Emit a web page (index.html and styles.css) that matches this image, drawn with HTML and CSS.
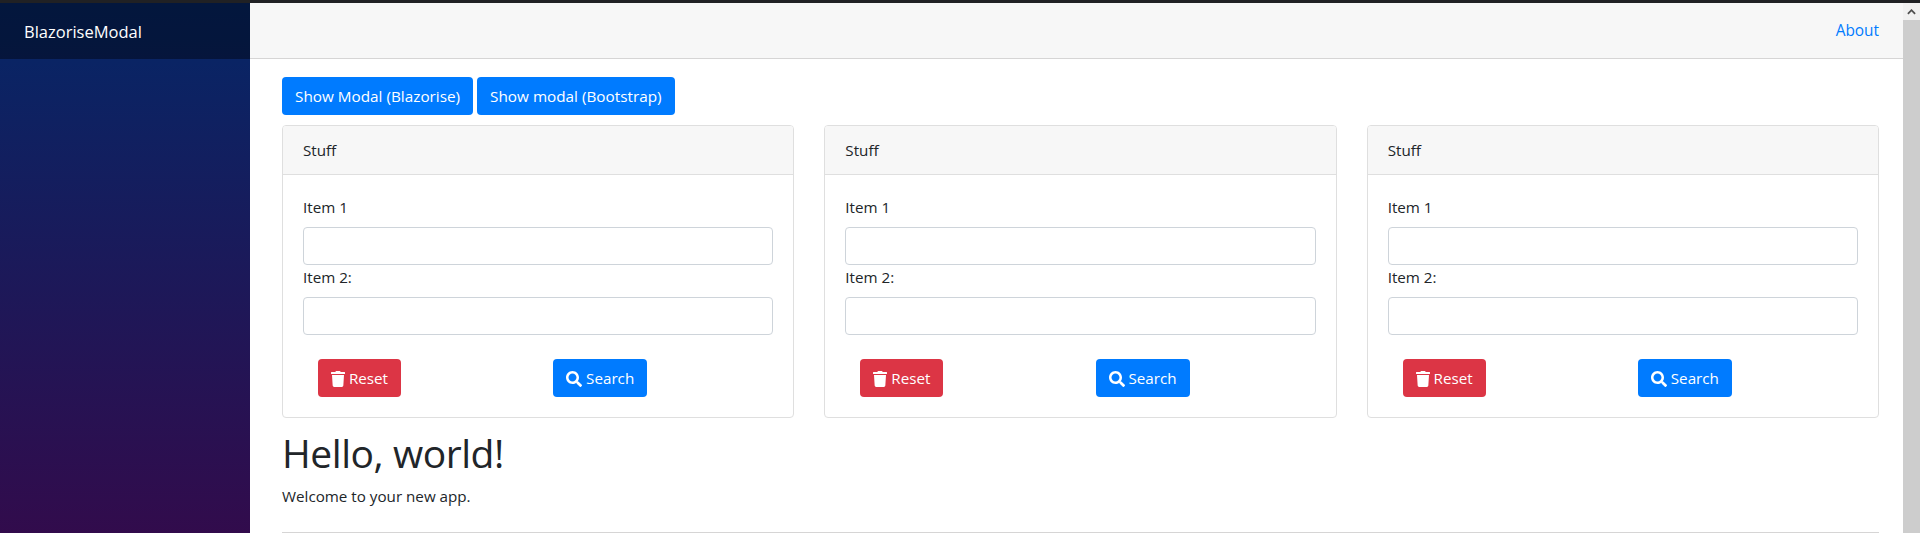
FILE: index.html
```html
<!DOCTYPE html>
<html lang="en">
<head>
<meta charset="utf-8">
<title>BlazoriseModal</title>
<link rel="stylesheet" href="styles.css">
</head>
<body>
<div class="topline"></div>
<div class="app">
  <aside class="sidebar">
    <div class="brand">BlazoriseModal</div>
  </aside>
  <main class="main">
    <div class="topbar"><a class="about" href="#">About</a></div>
    <div class="content">
      <div class="actions">
        <button class="btn primary">Show Modal (Blazorise)</button>
        <button class="btn primary">Show modal (Bootstrap)</button>
      </div>
      <div class="cards">
        <section class="card">
          <div class="card-header">Stuff</div>
          <div class="card-body">
            <label class="label">Item 1</label>
            <input class="input" type="text">
            <label class="label">Item 2:</label>
            <input class="input" type="text">
            <div class="row">
              <div class="col"><button class="btn danger"><svg class="icon trash" viewBox="0 0 448 512"><path fill="currentColor" d="M432 32H312l-9.400-18.700A24 24 0 0 0 281.100 0H166.800a23.700 23.700 0 0 0-21.400 13.300L136 32H16A16 16 0 0 0 0 48v32a16 16 0 0 0 16 16h416a16 16 0 0 0 16-16V48a16 16 0 0 0-16-16zM53.200 467a48 48 0 0 0 47.900 45h245.800a48 48 0 0 0 47.900-45L416 128H32z"/></svg> Reset</button></div>
              <div class="col"><button class="btn primary"><svg class="icon" viewBox="0 0 512 512"><path fill="currentColor" d="M505 442.700L405.300 343c-4.500-4.500-10.600-7-17-7H372c27.600-35.300 44-79.700 44-128C416 93.100 322.900 0 208 0S0 93.100 0 208s93.100 208 208 208c48.300 0 92.700-16.400 128-44v16.300c0 6.400 2.500 12.500 7 17l99.700 99.700c9.400 9.400 24.600 9.400 33.900 0l28.300-28.300c9.400-9.400 9.400-24.600.1-34zM208 336c-70.700 0-128-57.200-128-128 0-70.700 57.200-128 128-128 70.700 0 128 57.200 128 128 0 70.700-57.200 128-128 128z"/></svg> Search</button></div>
            </div>
          </div>
        </section>
        <section class="card">
          <div class="card-header">Stuff</div>
          <div class="card-body">
            <label class="label">Item 1</label>
            <input class="input" type="text">
            <label class="label">Item 2:</label>
            <input class="input" type="text">
            <div class="row">
              <div class="col"><button class="btn danger"><svg class="icon trash" viewBox="0 0 448 512"><path fill="currentColor" d="M432 32H312l-9.400-18.700A24 24 0 0 0 281.100 0H166.800a23.700 23.700 0 0 0-21.400 13.300L136 32H16A16 16 0 0 0 0 48v32a16 16 0 0 0 16 16h416a16 16 0 0 0 16-16V48a16 16 0 0 0-16-16zM53.200 467a48 48 0 0 0 47.900 45h245.800a48 48 0 0 0 47.900-45L416 128H32z"/></svg> Reset</button></div>
              <div class="col"><button class="btn primary"><svg class="icon" viewBox="0 0 512 512"><path fill="currentColor" d="M505 442.700L405.300 343c-4.500-4.500-10.600-7-17-7H372c27.600-35.300 44-79.700 44-128C416 93.100 322.900 0 208 0S0 93.100 0 208s93.100 208 208 208c48.300 0 92.700-16.400 128-44v16.300c0 6.400 2.500 12.500 7 17l99.700 99.700c9.400 9.400 24.600 9.400 33.900 0l28.300-28.300c9.400-9.400 9.400-24.600.1-34zM208 336c-70.700 0-128-57.200-128-128 0-70.700 57.200-128 128-128 70.700 0 128 57.200 128 128 0 70.700-57.200 128-128 128z"/></svg> Search</button></div>
            </div>
          </div>
        </section>
        <section class="card">
          <div class="card-header">Stuff</div>
          <div class="card-body">
            <label class="label">Item 1</label>
            <input class="input" type="text">
            <label class="label">Item 2:</label>
            <input class="input" type="text">
            <div class="row">
              <div class="col"><button class="btn danger"><svg class="icon trash" viewBox="0 0 448 512"><path fill="currentColor" d="M432 32H312l-9.400-18.700A24 24 0 0 0 281.100 0H166.800a23.700 23.700 0 0 0-21.400 13.300L136 32H16A16 16 0 0 0 0 48v32a16 16 0 0 0 16 16h416a16 16 0 0 0 16-16V48a16 16 0 0 0-16-16zM53.200 467a48 48 0 0 0 47.900 45h245.800a48 48 0 0 0 47.900-45L416 128H32z"/></svg> Reset</button></div>
              <div class="col"><button class="btn primary"><svg class="icon" viewBox="0 0 512 512"><path fill="currentColor" d="M505 442.700L405.300 343c-4.500-4.500-10.600-7-17-7H372c27.600-35.300 44-79.700 44-128C416 93.100 322.900 0 208 0S0 93.100 0 208s93.100 208 208 208c48.300 0 92.700-16.400 128-44v16.300c0 6.400 2.500 12.500 7 17l99.700 99.700c9.400 9.400 24.600 9.400 33.900 0l28.300-28.300c9.400-9.400 9.400-24.600.1-34zM208 336c-70.700 0-128-57.200-128-128 0-70.700 57.200-128 128-128 70.700 0 128 57.200 128 128 0 70.700-57.200 128-128 128z"/></svg> Search</button></div>
            </div>
          </div>
        </section>
      </div>
      <h1 class="title">Hello, world!</h1>
      <p class="welcome">Welcome to your new app.</p>
      <hr class="rule">
    </div>
  </main>
  <div class="scrollbar"><div class="scroll-btn"><svg class="chev" viewBox="0 0 10 6"><path d="M1 5l4-4 4 4" fill="none" stroke="#505050" stroke-width="2"/></svg></div><div class="scroll-thumb"></div></div>
</div>
</body>
</html>
```
FILE: styles.css
```css
* { box-sizing: border-box; }
html, body { margin: 0; height: 100%; overflow: hidden; }
body { font-family: "Open Sans", "Noto Sans", sans-serif; font-size: 15.2px; color: #212529; background: #fff; display: flex; flex-direction: column; }
.topline { height: 3px; background: #202124; flex: none; }
.app { flex: 1; display: flex; min-height: 0; }
.sidebar { width: 250px; flex: none; background: linear-gradient(180deg, #052767 0, #3a0647 630px); }
.brand { height: 56px; background: rgba(0,0,0,.4); color: #fff; font-size: 16.5px; padding-left: 24px; display: flex; align-items: center; }
.main { flex: 1; min-width: 0; overflow: hidden; }
.topbar { height: 56px; background: #f7f7f7; border-bottom: 1px solid #d6d5d5; display: flex; justify-content: flex-end; align-items: center; padding-right: 24px; }
.about { color: #007bff; text-decoration: none; font-size: 15.4px; }
.content { padding: 18px 24px 0 32px; }
.actions { display: flex; gap: 4px; }
.btn { font: inherit; font-size: 15.2px; line-height: 22px; color: #fff; border: 1px solid transparent; border-radius: 4px; padding: 7px 12px; height: 38px; white-space: nowrap; }
.actions .btn { font-size: 15.3px; }
.primary { background: #007bff; }
.danger { background: #dc3545; }
.cards { display: grid; grid-template-columns: repeat(3, 1fr); gap: 30px; margin-top: 10px; }
.card { border: 1px solid #dfdfdf; border-radius: 4px; }
.card-header { height: 49px; background: #f7f7f7; border-bottom: 1px solid #dfdfdf; padding: 0 20px; display: flex; align-items: center; border-radius: 3px 3px 0 0; }
.card-body { padding: 20px; display: flex; flex-direction: column; }
.label { line-height: 24px; margin-bottom: 8px; display: block; }
.input { height: 38px; border: 1px solid #ced4da; border-radius: 4px; background: #fff; width: 100%; display: block; }
.row { display: flex; margin-top: 24px; }
.col { flex: 1; padding-left: 15px; }
.icon { height: 16px; width: 16px; vertical-align: -3px; }
.trash { width: 14px; }
.title { font-size: 39px; font-weight: 400; letter-spacing: -0.45px; line-height: 48px; margin: 11px 0 7px; }
.welcome { margin: 0; line-height: 24px; }
.rule { border: 0; border-top: 1px solid #d6d5d5; margin: 24px 0 0; }
.scrollbar { width: 17px; flex: none; background: #f1f1f1; display: flex; flex-direction: column; }
.scroll-btn { height: 17px; display: flex; align-items: center; justify-content: center; }
.chev { width: 9px; height: 6px; }
.scroll-thumb { flex: 1; background: #cdcdcd; }
```
